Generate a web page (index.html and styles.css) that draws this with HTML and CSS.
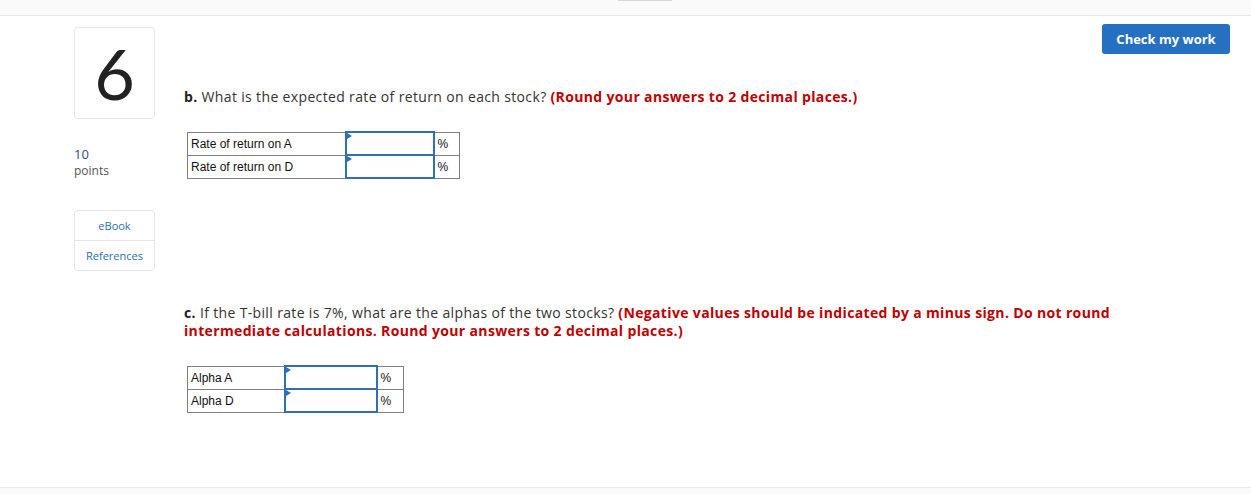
FILE: index.html
```html
<!DOCTYPE html>
<html>
<head>
<meta charset="utf-8">
<link rel="stylesheet" href="styles.css">
</head>
<body>
<div class="topbar"><div class="tab"></div></div>
<div class="main">
  <aside class="side">
    <div class="qnum">6</div>
    <div class="points"><div class="pts-num">10</div><div class="pts-label">points</div></div>
    <div class="links">
      <div class="link">eBook</div>
      <div class="link">References</div>
    </div>
  </aside>
  <section class="content">
    <p class="q qb"><b>b.</b> What is the expected rate of return on each stock? <span class="hint">(Round your answers to 2 decimal places.)</span></p>
    <table class="grid g1">
      <tr><td class="lbl">Rate of return on A</td><td class="inp"><span class="flag"></span></td><td class="unit">%</td></tr>
      <tr><td class="lbl">Rate of return on D</td><td class="inp"><span class="flag"></span></td><td class="unit">%</td></tr>
    </table>
    <p class="q qc"><b>c.</b> If the T-bill rate is 7%, what are the alphas of the two stocks? <span class="hint">(Negative values should be indicated by a minus sign. Do not round intermediate calculations. Round your answers to 2 decimal places.)</span></p>
    <table class="grid g2">
      <tr><td class="lbl">Alpha A</td><td class="inp"><span class="flag"></span></td><td class="unit">%</td></tr>
      <tr><td class="lbl">Alpha D</td><td class="inp"><span class="flag"></span></td><td class="unit">%</td></tr>
    </table>
  </section>
  <div class="actions"><button class="check">Check my work</button></div>
</div>
<div class="bottombar"></div>
</body>
</html>
```
FILE: styles.css
```css
html, body { margin: 0; padding: 0; background: #fff; }
body { font-family: "Open Sans", "Lato", sans-serif; color: #333; width: 1251px; height: 494px; overflow: hidden; }
.topbar { height: 15px; background: #fafafa; border-bottom: 1px solid #e8e8e8; position: relative; }
.tab { position: absolute; left: 618px; top: 0; width: 54px; height: 1px; background: #d8d8d8; }
.main { display: flex; height: 471px; }
.side { width: 81px; margin-left: 74px; padding-top: 11px; display: flex; flex-direction: column; flex: none; }
.qnum { height: 92px; border: 1px solid #e6e6e6; border-radius: 4px; display: flex; align-items: center; justify-content: center; font-family: "Lato", sans-serif; font-size: 70px; line-height: 1; color: #222; box-sizing: border-box; }
.points { margin-top: 26px; }
.pts-num { font-size: 13px; color: #1d4f91; line-height: 18px; }
.pts-label { font-size: 12px; color: #555; line-height: 16px; }
.links { margin-top: 31px; border: 1px solid #e6e6e6; border-radius: 4px; }
.link { height: 29px; display: flex; align-items: center; justify-content: center; font-size: 11px; color: #2a6ebb; }
.link + .link { border-top: 1px solid #e6e6e6; }
.content { margin-left: 29px; flex: 1; min-width: 0; padding-top: 72px; }
.q { margin: 0; font-size: 14px; line-height: 18px; letter-spacing: 0.35px; color: #333; }
.q b { color: #222; }
.hint { color: #c00000; font-weight: 700; }
.grid { border-collapse: collapse; font-family: "Liberation Sans", Arial, sans-serif; font-size: 12px; color: #111; margin-left: 3px; }
.grid td { border: 1px solid #808080; height: 23px; padding: 0 3px; box-sizing: border-box; }
.g1 { margin-top: 25px; }
.g1 .lbl { width: 158px; }
.g1 .inp { width: 88px; }
.g1 .unit { width: 26px; }
.g2 .lbl { width: 97px; }
.g2 .inp { width: 92px; }
.g2 .unit { width: 27px; }
.grid .inp { position: relative; border: 2px solid #2f6fb8; padding: 0; }
.flag { position: absolute; left: 0; top: 0; width: 0; height: 0; border-top: 3px solid transparent; border-bottom: 3px solid transparent; border-left: 5px solid #2f6fb8; }
.qc { margin-top: 125px; margin-right: -22px; }
.g2 { margin-top: 25px; }
.actions { flex: none; padding-top: 8px; padding-right: 21px; }
.check { background: #2670c1; color: #fff; border: 0; border-radius: 3px; width: 128px; height: 30px; font-family: "Open Sans", sans-serif; font-weight: 700; font-size: 13px; padding: 0; }
.bottombar { border-top: 1px solid #e8e8e8; height: 6px; background: #fafafa; }
```
